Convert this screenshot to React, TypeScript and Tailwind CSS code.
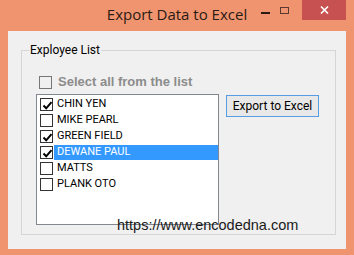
import React from "react";

const Check = () => (
  <svg width="13" height="13" viewBox="0 0 13 13" className="block">
    <path d="M2.5 6.5 L5.2 9.3 L10.5 3.2" fill="none" stroke="#000" strokeWidth="2" />
  </svg>
);

const items = [
  { name: "CHIN YEN", checked: true, sel: false },
  { name: "MIKE PEARL", checked: false, sel: false },
  { name: "GREEN FIELD", checked: true, sel: false },
  { name: "DEWANE PAUL", checked: true, sel: true },
  { name: "MATTS", checked: false, sel: false },
  { name: "PLANK OTO", checked: false, sel: false },
];

export default function App() {
  return (
    <div className="w-[354px] h-[255px] bg-[#F0946F] flex flex-col overflow-hidden">
      <div className="h-[31px] relative flex justify-center shrink-0">
        <span
          className="mt-[4px] text-[15px] leading-[20px] text-[#2a1a14]"
          style={{ fontFamily: '"Open Sans", sans-serif' }}
        >
          Export Data to Excel
        </span>
        <div className="absolute right-[8px] top-0 flex items-start">
          <div className="w-[30px] h-[20px] flex items-center justify-center">
            <div className="w-[9px] h-[2px] bg-[#2a1a14] mt-[5px]" />
          </div>
          <div className="w-[22px] h-[20px] flex items-center justify-start">
            <div className="w-[9px] h-[7px] border border-[#5a3a30] mt-[1px]" />
          </div>
          <div className="w-[44px] h-[20px] bg-[#C75050] flex items-center justify-center">
            <svg width="9" height="8" viewBox="0 0 9 8">
              <path d="M1 0.5 L8 7.5 M8 0.5 L1 7.5" stroke="#fff" strokeWidth="1.6" />
            </svg>
          </div>
        </div>
      </div>
      <div className="mx-[8px] mb-[6px] flex-1 bg-[#F0F0F0] relative pl-[13px] pt-[13px]">
        <div className="relative w-[315px] h-[191px] pt-[6px]">
          <div className="w-full h-full border border-[#D5D5D5] pl-[14px] pt-[24px]">
            <div className="flex items-center ml-[3px] h-[14px]">
              <div className="w-[13px] h-[13px] border border-[#777] bg-[#F0F0F0]" />
              <span
                className="ml-[6px] text-[13px] font-bold text-[#8C8C8C] leading-[14px]"
                style={{ fontFamily: '"Liberation Sans", sans-serif' }}
              >
                Select all from the list
              </span>
            </div>
            <div className="flex mt-[5px]">
              <div className="w-[183px] h-[131px] border border-[#828790] bg-white pt-[1px]">
                {items.map((it) => (
                  <div key={it.name} className="flex items-center h-[16px] pl-[3px] pr-[0px]">
                    <div className="w-[13px] h-[13px] border border-[#333] bg-white shrink-0">
                      {it.checked && <Check />}
                    </div>
                    <div
                      className={`ml-[1px] flex-1 h-[15px] flex items-center pl-[3px] text-[11px] ${
                        it.sel ? "bg-[#3399FF] text-white" : "text-black"
                      }`}
                      style={{ fontFamily: "Roboto, sans-serif" }}
                    >
                      {it.name}
                    </div>
                  </div>
                ))}
              </div>
              <div className="ml-[7px] mt-[1px] w-[93px] h-[22px] border border-[#569DE5] bg-[#E8E8E8] flex items-center justify-center">
                <span className="text-[12px] text-black" style={{ fontFamily: "Roboto, sans-serif" }}>
                  Export to Excel
                </span>
              </div>
            </div>
          </div>
          <span
            className="absolute left-[8px] top-[0px] px-[1px] bg-[#F0F0F0] text-[12px] leading-[12px] text-black"
            style={{ fontFamily: "Roboto, sans-serif" }}
          >
            Exployee List
          </span>
        </div>
        <span
          className="absolute left-[109px] top-[186px] text-[14.5px] leading-[17px] text-[#1a1a1a]"
          style={{ fontFamily: '"Liberation Sans", sans-serif' }}
        >
          https://www.encodedna.com
        </span>
      </div>
    </div>
  );
}
